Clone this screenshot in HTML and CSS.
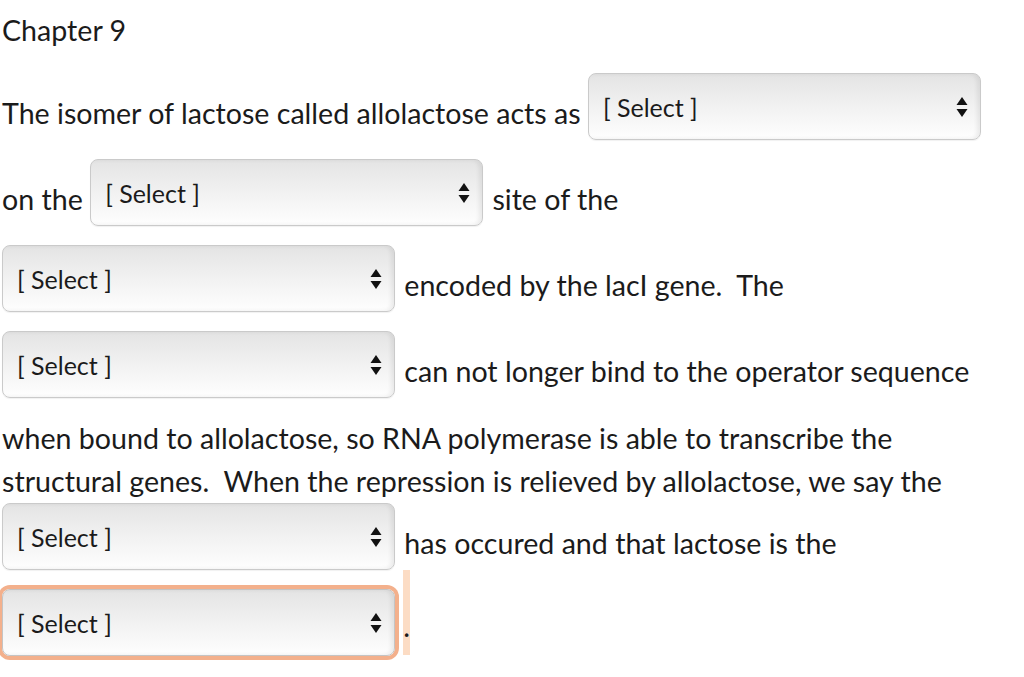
FILE: index.html
```html
<!DOCTYPE html>
<html lang="en">
<head>
    <meta charset="UTF-8">
    <meta name="viewport" content="width=device-width, initial-scale=1.0">
    <title>Chapter 9</title>
    <link rel="stylesheet" href="styles.css">
</head>
<body>
    <div class="quiz">
        <p class="title">Chapter 9</p>

        <p class="question">The isomer of lactose called allolactose acts as <span class="sel"><select><option>[ Select ]</option><option>an inducer</option><option>a repressor</option></select><svg viewBox="0 0 12 22"><polygon points="6,1 11.5,9 0.5,9"/><polygon points="0.5,13 11.5,13 6,21"/></svg></span> on the <span class="sel"><select><option>[ Select ]</option><option>allosteric</option><option>active</option></select><svg viewBox="0 0 12 22"><polygon points="6,1 11.5,9 0.5,9"/><polygon points="0.5,13 11.5,13 6,21"/></svg></span> site of the <span class="sel"><select><option>[ Select ]</option><option>lac repressor</option><option>CAP protein</option></select><svg viewBox="0 0 12 22"><polygon points="6,1 11.5,9 0.5,9"/><polygon points="0.5,13 11.5,13 6,21"/></svg></span> encoded by the lacI gene.&nbsp; The <span class="sel"><select><option>[ Select ]</option><option>lac repressor</option><option>operator</option></select><svg viewBox="0 0 12 22"><polygon points="6,1 11.5,9 0.5,9"/><polygon points="0.5,13 11.5,13 6,21"/></svg></span> can not longer bind to the operator sequence when bound to allolactose, so RNA polymerase is able to transcribe the structural genes.&nbsp; When the repression is relieved by allolactose, we say the <span class="sel"><select><option>[ Select ]</option><option>induction</option><option>repression</option></select><svg viewBox="0 0 12 22"><polygon points="6,1 11.5,9 0.5,9"/><polygon points="0.5,13 11.5,13 6,21"/></svg></span> has occured and that lactose is the <span class="sel focus"><select><option>[ Select ]</option><option>inducer</option><option>corepressor</option></select><svg viewBox="0 0 12 22"><polygon points="6,1 11.5,9 0.5,9"/><polygon points="0.5,13 11.5,13 6,21"/></svg></span><span class="mark">.</span></p>
    </div>
</body>
</html>
```

FILE: styles.css
```css
html, body {
    margin: 0;
    padding: 0;
    overflow: hidden;
}
body {
    font-family: Lato, "Open Sans", sans-serif;
    font-size: 28.6px;
    color: #1b1b1b;
    background: #fff;
}
.quiz {
    width: 1000px;
    padding: 9px 0 0 2px;
}
p {
    margin: 0;
    line-height: 43px;
}
.title {
    margin-bottom: 21px;
}
.sel {
    position: relative;
    display: inline-block;
    margin: 0 2px 19px 0;
    vertical-align: 7px;
}
.sel select {
    -webkit-appearance: none;
    appearance: none;
    display: block;
    width: 393px;
    height: 67px;
    padding: 0 40px 0 14px;
    font-family: Lato, "Open Sans", sans-serif;
    font-size: 25px;
    color: #1b1b1b;
    background: linear-gradient(#e4e4e4, #f4f4f4 60%, #fefefe);
    border: 1px solid #cacaca;
    border-radius: 8px;
    box-shadow: inset -3px 0 4px rgba(0, 0, 0, 0.07), 0 1px 1px rgba(0, 0, 0, 0.06);
    outline: none;
}
.sel svg {
    position: absolute;
    right: 13px;
    top: 50%;
    width: 12px;
    height: 22px;
    margin-top: -11px;
    fill: #111;
    pointer-events: none;
}
.sel.focus select {
    box-shadow: 0 0 0 4px #f3b08c, inset -3px 0 4px rgba(0, 0, 0, 0.07);
    border-color: #c4c4c4;
}
.mark {
    display: inline-flex;
    align-items: flex-end;
    justify-content: center;
    width: 7px;
    height: 85px;
    margin: -19px 0 20px 6px;
    padding-bottom: 12px;
    box-sizing: border-box;
    line-height: normal;
    vertical-align: bottom;
    background: #fcdcc4;
}
```
